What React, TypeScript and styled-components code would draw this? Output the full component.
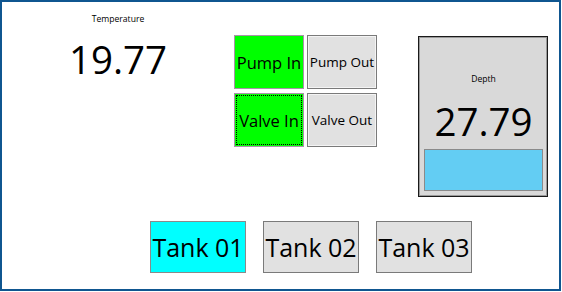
import React from "react";
import styled, { createGlobalStyle } from "styled-components";

const Global = createGlobalStyle`
  html, body { margin: 0; padding: 0; background: #ffffff; }
  body { font-family: "Open Sans", "Noto Sans", sans-serif; color: #000; }
`;

const Frame = styled.div`
  box-sizing: border-box;
  width: 561px;
  height: 291px;
  border: 2px solid #0f5690;
  background: #ffffff;
  display: flex;
  flex-direction: column;
`;

const TopRow = styled.div`
  display: flex;
  align-items: flex-start;
  height: 216px;
`;

const Reading = styled.div`
  width: 160px;
  margin-left: 36px;
  margin-top: 11px;
  display: flex;
  flex-direction: column;
  align-items: center;
`;

const Label = styled.div`
  font-size: 8.6px;
  line-height: 12px;
`;

const Value = styled.div<{ $top: number }>`
  font-size: 38.5px;
  line-height: 48px;
  margin-top: ${(p) => p.$top}px;
`;

const Controls = styled.div`
  margin-left: 36px;
  margin-top: 33px;
  display: grid;
  grid-template-columns: 70px 70px;
  grid-auto-rows: 54px;
  column-gap: 3px;
  row-gap: 4px;
`;

const ControlButton = styled.button<{ $on?: boolean; $big?: boolean; $focus?: boolean }>`
  box-sizing: border-box;
  padding: 0;
  margin: 0;
  font-family: "Open Sans", "Noto Sans", sans-serif;
  font-size: ${(p) => (p.$big ? "16.5px" : "13.5px")};
  color: #000;
  background: ${(p) => (p.$on ? "#00ff00" : "#e1e1e1")};
  border: 1px solid ${(p) => (p.$on ? "#a993a9" : "#7a7a7a")};
  box-shadow: ${(p) => (p.$on ? "none" : "inset 0 0 0 1px #f4f4f4")};
  display: flex;
  align-items: center;
  justify-content: center;
  white-space: nowrap;
  overflow: hidden;
  outline: ${(p) => (p.$focus ? "1px dotted #000" : "none")};
  outline-offset: -3px;
`;

const DepthPanel = styled.div`
  box-sizing: border-box;
  margin-left: 41px;
  margin-top: 34px;
  width: 130px;
  height: 161px;
  border: 1px solid #1a1a1a;
  box-shadow: inset 0 0 0 1px #9a9a9a;
  background: #d9d9d9;
  display: flex;
  flex-direction: column;
  align-items: center;
  padding: 36px 4px 5px 5px;
`;

const Level = styled.div`
  box-sizing: border-box;
  align-self: stretch;
  margin-top: auto;
  height: 42px;
  background: #63cdf3;
  border: 1px solid #8a8a8a;
`;

const TankRow = styled.div`
  display: flex;
  gap: 17px;
  margin-left: 148px;
  margin-top: 3px;
`;

const TankButton = styled.button<{ $on?: boolean }>`
  box-sizing: border-box;
  width: 96px;
  height: 52px;
  padding: 0;
  margin: 0;
  font-family: "Open Sans", "Noto Sans", sans-serif;
  font-size: 25px;
  color: #000;
  background: ${(p) => (p.$on ? "#00ffff" : "#e1e1e1")};
  border: 1px solid ${(p) => (p.$on ? "#8a8a8a" : "#7a7a7a")};
  display: flex;
  align-items: center;
  justify-content: center;
  white-space: nowrap;
  overflow: hidden;
`;

export default function App() {
  return (
    <>
      <Global />
      <Frame>
        <TopRow>
          <Reading>
            <Label>Temperature</Label>
            <Value $top={10}>19.77</Value>
          </Reading>
          <Controls>
            <ControlButton $on $big>Pump In</ControlButton>
            <ControlButton>Pump Out</ControlButton>
            <ControlButton $on $big $focus>Valve In</ControlButton>
            <ControlButton>Valve Out</ControlButton>
          </Controls>
          <DepthPanel>
            <Label>Depth</Label>
            <Value $top={12}>27.79</Value>
            <Level />
          </DepthPanel>
        </TopRow>
        <TankRow>
          <TankButton $on>Tank 01</TankButton>
          <TankButton>Tank 02</TankButton>
          <TankButton>Tank 03</TankButton>
        </TankRow>
      </Frame>
    </>
  );
}
